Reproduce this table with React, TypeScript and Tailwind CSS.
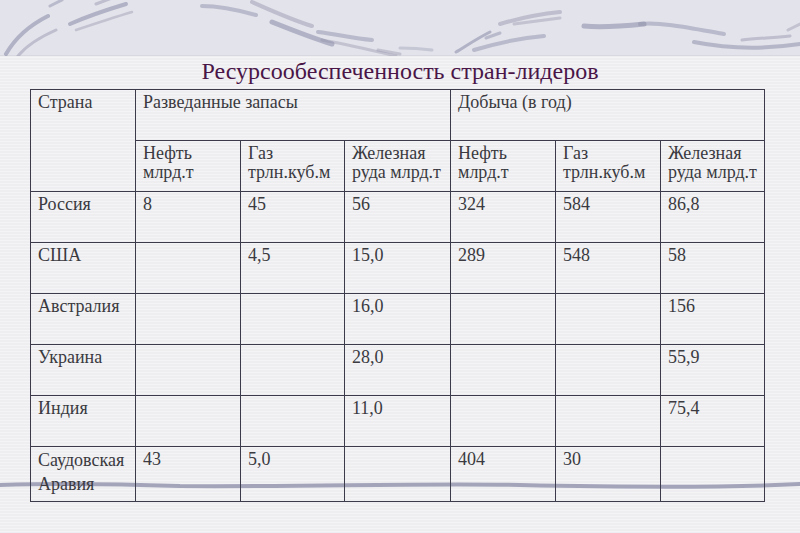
import React from 'react';

const serif = { fontFamily: '"Liberation Serif", "Times New Roman", "DejaVu Serif", serif' };

const rows: { name: React.ReactNode; cells: string[]; tall?: boolean }[] = [
  { name: 'Россия', cells: ['8', '45', '56', '324', '584', '86,8'] },
  { name: 'США', cells: ['', '4,5', '15,0', '289', '548', '58'] },
  { name: 'Австралия', cells: ['', '', '16,0', '', '', '156'] },
  { name: 'Украина', cells: ['', '', '28,0', '', '', '55,9'] },
  { name: 'Индия', cells: ['', '', '11,0', '', '', '75,4'] },
  { name: 'Саудовская Аравия', cells: ['43', '5,0', '', '404', '30', ''], tall: true },
];

function TopSwooshes() {
  return (
    <svg width="800" height="56" viewBox="0 0 800 56" className="block">
      <g fill="none" stroke="#9091ab" strokeLinecap="round">
        <path d="M6 54 C 14 40, 28 26, 48 16" strokeWidth="4" opacity="0.6" />
        <path d="M18 56 C 26 46, 38 38, 56 30" strokeWidth="3" opacity="0.45" />
        <path d="M50 6 L 62 0" strokeWidth="3" opacity="0.5" />
        <path d="M70 24 C 88 16, 106 10, 126 4" strokeWidth="4" opacity="0.6" />
        <path d="M76 30 C 94 24, 112 18, 132 12" strokeWidth="2.5" opacity="0.4" />
        <path d="M96 4 L 112 -2" strokeWidth="3" opacity="0.45" />
        <path d="M202 6 C 220 6, 238 10, 256 15" strokeWidth="4" opacity="0.5" />
        <path d="M252 2 C 270 10, 292 20, 312 26" strokeWidth="4" opacity="0.45" />
        <path d="M272 22 C 292 30, 312 38, 332 44" strokeWidth="5" opacity="0.6" />
        <path d="M318 32 C 336 34, 352 38, 372 40" strokeWidth="4" opacity="0.5" />
        <path d="M322 40 C 346 44, 370 50, 396 56" strokeWidth="3" opacity="0.4" />
        <path d="M378 50 L 400 54" strokeWidth="3" opacity="0.4" />
        <path d="M400 48 C 412 48, 424 49, 432 50" strokeWidth="3" opacity="0.35" />
        <path d="M456 52 C 466 46, 478 38, 490 32" strokeWidth="3" opacity="0.6" />
        <path d="M474 50 C 494 44, 520 38, 544 36" strokeWidth="4" opacity="0.5" />
        <path d="M486 38 L 500 33" strokeWidth="3" opacity="0.5" />
        <path d="M500 24 C 520 18, 540 14, 560 12" strokeWidth="4" opacity="0.45" />
        <path d="M514 24 L 560 18" strokeWidth="3" opacity="0.4" />
        <path d="M584 26 C 604 28, 624 26, 644 24" strokeWidth="5" opacity="0.6" />
        <path d="M640 24 C 662 22, 690 28, 724 34" strokeWidth="4" opacity="0.5" />
        <path d="M694 42 C 724 48, 760 50, 800 44" strokeWidth="4" opacity="0.55" />
        <path d="M742 40 C 756 38, 772 38, 790 36" strokeWidth="3" opacity="0.45" />
        <path d="M788 30 L 800 24" strokeWidth="3" opacity="0.4" />
      </g>
    </svg>
  );
}

export default function App() {
  const td = 'border border-[#3b3b4c] align-top pl-[7px] pr-[1px] pt-[3px] text-left font-normal';
  return (
    <div
      className="relative w-[800px] h-[533px] overflow-hidden bg-[#eeeef1] text-[#3a3a40]"
      style={serif}
    >
      {/* paper texture */}
      <div className="absolute inset-0 bg-[repeating-linear-gradient(180deg,rgba(255,255,255,0.35)_0px,rgba(255,255,255,0.35)_1px,transparent_1px,transparent_3px)]" />

      <div className="relative h-[56px] bg-[#e3e3eb] border-b border-[#d8d8e0]">
        <TopSwooshes />
      </div>

      {/* bottom stroke behind the table */}
      <svg className="absolute left-0 top-[478px]" width="800" height="14" viewBox="0 0 800 14">
        <path
          d="M0 7 C 60 5, 120 6, 180 8 C 300 9, 420 5, 520 7 C 620 9, 720 10, 800 6"
          fill="none"
          stroke="#9596b0"
          strokeWidth="4"
          strokeLinecap="round"
          opacity="0.85"
        />
      </svg>

      <div className="relative pt-[2px] mb-[4px] text-center text-[24px] leading-[27px] text-[#4a1648]">
        Ресурсообеспеченность стран-лидеров
      </div>

      <table className="relative ml-[30px] w-[734px] table-fixed border-collapse text-[18px] leading-[19px]">
        <colgroup>
          <col className="w-[105px]" />
          <col className="w-[105px]" />
          <col className="w-[104px]" />
          <col className="w-[106px]" />
          <col className="w-[105px]" />
          <col className="w-[105px]" />
          <col className="w-[104px]" />
        </colgroup>
        <thead>
          <tr className="h-[51px]">
            <th rowSpan={2} className={td}>Страна</th>
            <th colSpan={3} className={td}>Разведанные запасы</th>
            <th colSpan={3} className={td}>Добыча (в год)</th>
          </tr>
          <tr className="h-[51px]">
            <th className={td}>Нефть<br />млрд.т</th>
            <th className={td}>Газ<br />трлн.куб.м</th>
            <th className={td}>Железная<br />руда млрд.т</th>
            <th className={td}>Нефть<br />млрд.т</th>
            <th className={td}>Газ<br />трлн.куб.м</th>
            <th className={td}>Железная<br />руда млрд.т</th>
          </tr>
        </thead>
        <tbody>
          {rows.map((r, i) => (
            <tr key={i} className={r.tall ? 'h-[55px]' : 'h-[51px]'}>
              <td className={`${td} ${r.tall ? 'leading-[24px] !pt-[1px]' : ''}`}>{r.name}</td>
              {r.cells.map((c, j) => (
                <td key={j} className={td}>{c}</td>
              ))}
            </tr>
          ))}
        </tbody>
      </table>
    </div>
  );
}
